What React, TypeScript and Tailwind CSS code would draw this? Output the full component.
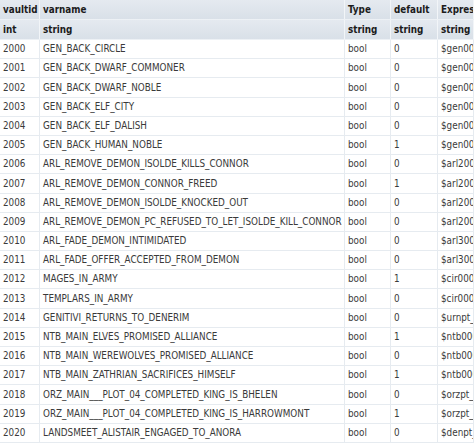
const rows: [string, string, string, string, string][] = [
  ['2000', 'GEN_BACK_CIRCLE', 'bool', '0', '$gen00q_back_circle'],
  ['2001', 'GEN_BACK_DWARF_COMMONER', 'bool', '0', '$gen00q_back_dwarf'],
  ['2002', 'GEN_BACK_DWARF_NOBLE', 'bool', '0', '$gen00q_back_dwarf'],
  ['2003', 'GEN_BACK_ELF_CITY', 'bool', '0', '$gen00q_back_elf'],
  ['2004', 'GEN_BACK_ELF_DALISH', 'bool', '0', '$gen00q_back_elf'],
  ['2005', 'GEN_BACK_HUMAN_NOBLE', 'bool', '1', '$gen00q_back_human'],
  ['2006', 'ARL_REMOVE_DEMON_ISOLDE_KILLS_CONNOR', 'bool', '0', '$arl200q_remove'],
  ['2007', 'ARL_REMOVE_DEMON_CONNOR_FREED', 'bool', '1', '$arl200q_remove'],
  ['2008', 'ARL_REMOVE_DEMON_ISOLDE_KNOCKED_OUT', 'bool', '0', '$arl200q_remove'],
  ['2009', 'ARL_REMOVE_DEMON_PC_REFUSED_TO_LET_ISOLDE_KILL_CONNOR', 'bool', '0', '$arl200q_remove'],
  ['2010', 'ARL_FADE_DEMON_INTIMIDATED', 'bool', '0', '$arl300q_fade'],
  ['2011', 'ARL_FADE_OFFER_ACCEPTED_FROM_DEMON', 'bool', '0', '$arl300q_fade'],
  ['2012', 'MAGES_IN_ARMY', 'bool', '1', '$cir000pt_mages'],
  ['2013', 'TEMPLARS_IN_ARMY', 'bool', '0', '$cir000pt_templars'],
  ['2014', 'GENITIVI_RETURNS_TO_DENERIM', 'bool', '0', '$urnpt_main'],
  ['2015', 'NTB_MAIN_ELVES_PROMISED_ALLIANCE', 'bool', '1', '$ntb000pt_main'],
  ['2016', 'NTB_MAIN_WEREWOLVES_PROMISED_ALLIANCE', 'bool', '0', '$ntb000pt_main'],
  ['2017', 'NTB_MAIN_ZATHRIAN_SACRIFICES_HIMSELF', 'bool', '1', '$ntb000pt_main'],
  ['2018', 'ORZ_MAIN___PLOT_04_COMPLETED_KING_IS_BHELEN', 'bool', '0', '$orzpt_main'],
  ['2019', 'ORZ_MAIN___PLOT_04_COMPLETED_KING_IS_HARROWMONT', 'bool', '1', '$orzpt_main'],
  ['2020', 'LANDSMEET_ALISTAIR_ENGAGED_TO_ANORA', 'bool', '0', '$denpt_main'],
];

const cols = 'grid grid-cols-[40px_305px_46px_47px_1fr]';

function HeadRow({ cells }: { cells: string[] }) {
  return (
    <div className={`${cols} h-5 bg-gradient-to-b from-[#e5eaf0] to-[#d9e0e8] border-b border-[#edf1f5]`}>
      {cells.map((c, i) => (
        <div key={i} className="flex items-center overflow-hidden whitespace-nowrap border-r border-[#f2f5f8] pl-[3px] font-bold text-[#1c1c1c]">
          {c}
        </div>
      ))}
    </div>
  );
}

export default function App() {
  return (
    <div className="h-[445px] w-[474px] overflow-hidden bg-white text-[9.8px] leading-none" style={{ fontFamily: '"DejaVu Sans Condensed", "DejaVu Sans", sans-serif' }}>
      <HeadRow cells={['vaultid', 'varname', 'Type', 'default', 'Expression']} />
      <HeadRow cells={['int', 'string', 'string', 'string', 'string']} />
      {rows.map((r) => (
        <div key={r[0]} className={`${cols} h-[19.2px] border-b border-[#e6ebf0]`}>
          {r.map((c, i) => (
            <div key={i} className="flex items-center overflow-hidden whitespace-nowrap border-r border-[#e6ebf0] pl-[3px] text-[#3a3a3a]">
              {c}
            </div>
          ))}
        </div>
      ))}
    </div>
  );
}
